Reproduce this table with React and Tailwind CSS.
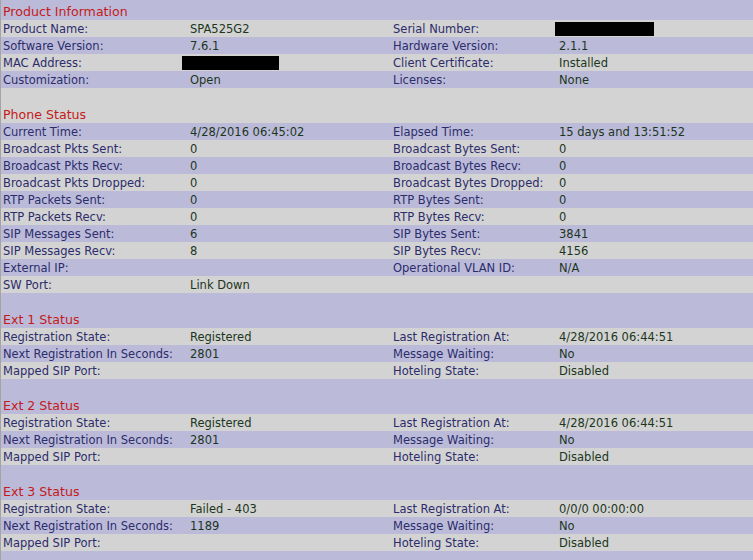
import React from "react";

const sections = [
  {
    title: "Product Information",
    rows: [
      ["Product Name:", "SPA525G2", "Serial Number:", { redact: "w-[99px] -ml-[4px]" }],
      ["Software Version:", "7.6.1", "Hardware Version:", "2.1.1"],
      ["MAC Address:", { redact: "w-[97px] -ml-[8px]" }, "Client Certificate:", "Installed"],
      ["Customization:", "Open", "Licenses:", "None"],
    ],
  },
  {
    title: "Phone Status",
    rows: [
      ["Current Time:", "4/28/2016 06:45:02", "Elapsed Time:", "15 days and 13:51:52"],
      ["Broadcast Pkts Sent:", "0", "Broadcast Bytes Sent:", "0"],
      ["Broadcast Pkts Recv:", "0", "Broadcast Bytes Recv:", "0"],
      ["Broadcast Pkts Dropped:", "0", "Broadcast Bytes Dropped:", "0"],
      ["RTP Packets Sent:", "0", "RTP Bytes Sent:", "0"],
      ["RTP Packets Recv:", "0", "RTP Bytes Recv:", "0"],
      ["SIP Messages Sent:", "6", "SIP Bytes Sent:", "3841"],
      ["SIP Messages Recv:", "8", "SIP Bytes Recv:", "4156"],
      ["External IP:", "", "Operational VLAN ID:", "N/A"],
      ["SW Port:", "Link Down", "", ""],
    ],
  },
  {
    title: "Ext 1 Status",
    rows: [
      ["Registration State:", "Registered", "Last Registration At:", "4/28/2016 06:44:51"],
      ["Next Registration In Seconds:", "2801", "Message Waiting:", "No"],
      ["Mapped SIP Port:", "", "Hoteling State:", "Disabled"],
    ],
  },
  {
    title: "Ext 2 Status",
    rows: [
      ["Registration State:", "Registered", "Last Registration At:", "4/28/2016 06:44:51"],
      ["Next Registration In Seconds:", "2801", "Message Waiting:", "No"],
      ["Mapped SIP Port:", "", "Hoteling State:", "Disabled"],
    ],
  },
  {
    title: "Ext 3 Status",
    rows: [
      ["Registration State:", "Failed - 403", "Last Registration At:", "0/0/0 00:00:00"],
      ["Next Registration In Seconds:", "1189", "Message Waiting:", "No"],
      ["Mapped SIP Port:", "", "Hoteling State:", "Disabled"],
    ],
  },
];

function Value({ v }) {
  if (v && typeof v === "object") {
    return <span className={"inline-block h-[14px] mt-[2px] bg-black " + v.redact} />;
  }
  return <span className="text-[#1c361c]">{v}</span>;
}

function App() {
  let n = 0;
  const bg = () => (n++ % 2 === 0 ? "bg-[#bbbbd9]" : "bg-[#d3d3d3]");

  return (
    <div
      className="w-[753px] h-[560px] overflow-hidden bg-[#bbbbd9] border-l border-[#a4a4a4] text-[11.5px]"
      style={{ fontFamily: "Verdana, 'DejaVu Sans', sans-serif" }}
    >
      {sections.map((s, si) => (
        <div key={s.title}>
          <div className={bg() + " flex flex-col justify-end pl-[2px] " + (si === 0 ? "h-[20px]" : "h-[35px]")}>
            <div className="h-[20px] leading-[24px] text-[12.6px] text-[#c41a1a]">{s.title}</div>
          </div>
          {s.rows.map((r, ri) => (
            <div
              key={ri}
              className={bg() + " grid grid-cols-[187px_203px_166px_1fr] h-[17px] leading-[19px] pl-[2px] whitespace-nowrap"}
            >
              <span className="text-[#2c2c6c]">{r[0]}</span>
              <Value v={r[1]} />
              <span className="text-[#2c2c6c]">{r[2]}</span>
              <Value v={r[3]} />
            </div>
          ))}
        </div>
      ))}
    </div>
  );
}

export default App;
